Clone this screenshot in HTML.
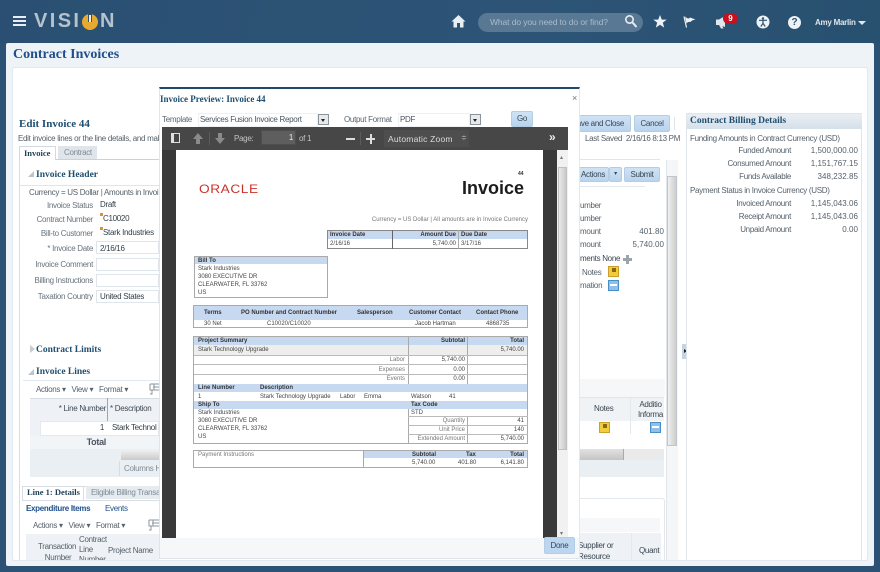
<!DOCTYPE html>
<html><head><meta charset="utf-8"><style>
html,body{margin:0;padding:0;width:880px;height:572px;overflow:hidden;background:#2b5174}
*{box-sizing:border-box}
body{font-family:"Liberation Sans",sans-serif;font-size:8px;letter-spacing:-.3px;color:#56616b;position:relative}
.a,.t,.r,.b{position:absolute}
.t{white-space:nowrap;line-height:10px}
.r{white-space:nowrap;line-height:10px;text-align:right}
.n{letter-spacing:.05px;font-size:8px}
.s{font-family:"Liberation Serif",serif;letter-spacing:0}
.h{font-family:"Liberation Serif",serif;font-weight:bold;color:#1f4e6e;letter-spacing:0}
.btn{position:absolute;background:linear-gradient(#cfe3f5,#b8d4ee);border:1px solid #b4cde3;border-radius:2px;text-align:center;color:#3a4650;line-height:15px;font-size:8px;white-space:nowrap;overflow:hidden}
.inp{position:absolute;background:#fff;border:1px solid #dfe5ea;height:13px}
.p{font-family:"Liberation Sans",sans-serif;font-size:6px;color:#444;line-height:8px;letter-spacing:0}
.ph{font-weight:bold;color:#333}
.bl{background:#c6d9f0}
</style></head><body>

<!-- header -->
<div class="a" style="left:0;top:0;width:880px;height:43px;background:linear-gradient(100deg,#2a4f72,#2d5476 60%,#28506f)"></div>
<div class="a" style="left:13px;top:16px;width:13px;height:2px;background:#e8edf2"></div>
<div class="a" style="left:13px;top:20px;width:13px;height:2px;background:#e8edf2"></div>
<div class="a" style="left:13px;top:24px;width:13px;height:2px;background:#e8edf2"></div>
<div class="t" style="left:34px;top:11px;font-size:20px;line-height:20px;font-weight:bold;color:#b6c2cc;letter-spacing:2.4px">VISI</div>
<div class="a" style="left:82px;top:14px;width:16px;height:16px;border-radius:50%;background:#e8a92f"></div>
<div class="a" style="left:88px;top:12px;width:4px;height:10px;background:#2c5173"></div>
<div class="a" style="left:89px;top:15px;width:2px;height:7px;background:#f4efe2"></div>
<div class="t" style="left:100px;top:11px;font-size:20px;line-height:20px;font-weight:bold;color:#b6c2cc;letter-spacing:0">N</div>

<svg class="a" style="left:451px;top:14px" width="15" height="14" viewBox="0 0 15 14"><path d="M7.5 1L0.5 7.5H2.5V13.5H6V9H9V13.5H12.500V7.500H14.500Z" fill="#e9eef2"/></svg>
<div class="a" style="left:478px;top:13px;width:165px;height:19px;border-radius:10px;background:#587893"></div>
<div class="t" style="left:490px;top:17px;font-size:8.500px;letter-spacing:-.1px;color:#a9bccb">What do you need to do or find?</div>
<svg class="a" style="left:624px;top:14px" width="14" height="15" viewBox="0 0 14 15"><circle cx="5.500" cy="5.500" r="3.700" fill="none" stroke="#e9eef2" stroke-width="1.600"/><path d="M8.500 8.500L12.500 13" stroke="#e9eef2" stroke-width="2"/></svg>
<svg class="a" style="left:653px;top:15px" width="14" height="13" viewBox="0 0 14 13"><path d="M7 0L8.800 4.600H13.700L9.800 7.600L11.200 12.600L7 9.700L2.800 12.600L4.200 7.600L.3 4.600H5.200Z" fill="#eef2f5"/></svg>
<svg class="a" style="left:683px;top:15px" width="15" height="14" viewBox="0 0 15 14"><path d="M1 1.500L3.500 12.500" stroke="#eef2f5" stroke-width="1.200" fill="none"/><path d="M2 1.500C4 3.500 6 4.200 7 2.500L12.500 4.500C10 4.800 8.500 5.800 7.500 7C6 6.500 4.500 7 3.500 8.500Z" fill="#eef2f5"/></svg>
<svg class="a" style="left:715px;top:15px" width="14" height="14" viewBox="0 0 14 14"><path d="M1 4.500H4L10 1V12L4 10H1Z" fill="#dfe6ec"/><path d="M4 10L6 13.500H8.500L7 10.500Z" fill="#dfe6ec"/></svg>
<div class="a" style="left:723px;top:13px;width:15px;height:11px;border-radius:6px;background:#c8101e;color:#fff;font-size:8px;line-height:11px;text-align:center;font-weight:bold;letter-spacing:0">9</div>
<svg class="a" style="left:756px;top:15px" width="14" height="14" viewBox="0 0 14 14"><circle cx="7" cy="7" r="6.500" fill="#eef2f5"/><circle cx="7" cy="3.500" r="1.200" fill="#2c5173"/><path d="M3 5.300H11M7 5.300V8.300M7 8.300L4.800 11.500M7 8.300L9.200 11.500" stroke="#2c5173" stroke-width="1.200" fill="none"/></svg>
<div class="a" style="left:788px;top:16px;width:13px;height:13px;border-radius:50%;background:#eef2f5;color:#2c5173;font-size:10px;line-height:13px;text-align:center;font-weight:bold;letter-spacing:0">?</div>
<div class="t" style="left:815px;top:18px;font-size:8px;letter-spacing:-.25px;font-weight:bold;color:#dfe6ec">Amy Marlin</div>
<div class="a" style="left:858px;top:21px;border-left:4px solid transparent;border-right:4px solid transparent;border-top:4px solid #dfe6ec"></div>

<!-- main panel -->
<div class="a" style="left:6px;top:43px;width:868px;height:523px;background:#eef3f7;border-radius:2px"></div>
<div class="t h" style="left:13px;top:47px;font-size:14px;line-height:15px;color:#1f4f8a">Contract Invoices</div>
<div class="a" style="left:12px;top:67px;width:856px;height:494px;background:#fff;border:1px solid #e3e8ed;border-radius:3px"></div>

<!-- left content -->
<div class="t h" style="left:19px;top:118px;font-size:11px;line-height:12px">Edit Invoice 44</div>
<div class="t" style="left:18px;top:134px">Edit invoice lines or the line details, and make</div>
<div class="a" style="left:19px;top:146px;width:140px;height:414px;border-left:1px solid #d7dde3"></div>
<div class="a" style="left:19px;top:159px;width:140px;height:1px;background:#c9d2da"></div>
<div class="a" style="left:19px;top:146px;width:37px;height:14px;background:#fff;border:1px solid #d2dae1;border-bottom:none"></div>
<div class="t s" style="left:24px;top:148px;font-weight:bold;color:#1f3f55;font-size:8.500px">Invoice</div>
<div class="a" style="left:58px;top:146px;width:39px;height:13px;background:#dfe5ea"></div>
<div class="t" style="left:64px;top:148px;color:#7f8b96">Contract</div>
<div class="a" style="left:28px;top:171px;border-left:6px solid transparent;border-bottom:6px solid #bcc4cc"></div>
<div class="t h" style="left:36px;top:170px;font-size:9.500px">Invoice Header</div>
<div class="a" style="left:20px;top:185px;width:139px;height:1px;background:#dfe5ea"></div>
<div class="t" style="left:29px;top:188px">Currency = US Dollar | Amounts in Invoi</div>
<div class="r" style="left:20px;top:201px;width:73px;color:#69737d">Invoice Status</div>
<div class="t" style="left:100px;top:200px;color:#333f49">Draft</div>
<div class="r" style="left:20px;top:215px;width:73px;color:#69737d">Contract Number</div>
<div class="a" style="left:100px;top:213px;width:3px;height:3px;background:#d9923b"></div>
<div class="t" style="left:103px;top:214px;color:#333f49">C10020</div>
<div class="r" style="left:20px;top:229px;width:73px;color:#69737d">Bill-to Customer</div>
<div class="a" style="left:100px;top:227px;width:3px;height:3px;background:#d9923b"></div>
<div class="t" style="left:103px;top:228px;color:#333f49">Stark Industries</div>
<div class="r" style="left:20px;top:244px;width:73px;color:#69737d">* Invoice Date</div>
<div class="inp" style="left:96px;top:241px;width:63px"></div>
<div class="t" style="left:100px;top:244px;color:#333f49">2/16/16</div>
<div class="r" style="left:20px;top:260px;width:73px;color:#69737d">Invoice Comment</div>
<div class="inp" style="left:96px;top:258px;width:63px"></div>
<div class="r" style="left:20px;top:276px;width:73px;color:#69737d">Billing Instructions</div>
<div class="inp" style="left:96px;top:274px;width:63px"></div>
<div class="r" style="left:20px;top:292px;width:73px;color:#69737d">Taxation Country</div>
<div class="inp" style="left:96px;top:290px;width:63px"></div>
<div class="t" style="left:100px;top:292px;color:#333f49">United States</div>

<div class="a" style="left:30px;top:345px;border-left:5px solid #c4ccd4;border-top:4px solid transparent;border-bottom:4px solid transparent"></div>
<div class="t h" style="left:36px;top:345px;font-size:9.500px">Contract Limits</div>
<div class="a" style="left:28px;top:369px;border-left:6px solid transparent;border-bottom:6px solid #bcc4cc"></div>
<div class="t h" style="left:36px;top:367px;font-size:9.500px">Invoice Lines</div>
<div class="a" style="left:23px;top:380px;width:136px;height:1px;background:#e3e8ed"></div>
<div class="t" style="left:36px;top:385px">Actions ▾ &nbsp;&nbsp;View ▾ &nbsp;&nbsp;Format ▾</div>
<svg class="a" style="left:149px;top:383px" width="10" height="12" viewBox="0 0 10 12"><path d="M1 1H10M1 1V7H10M4 4H10M5 1V7M3 7V11H1" stroke="#8a949d" fill="none"/></svg>
<div class="a" style="left:30px;top:398px;width:129px;height:38px;background:#eef2f6"></div>
<div class="a" style="left:30px;top:398px;width:129px;height:1px;background:#d5dce2"></div>
<div class="a" style="left:107px;top:398px;width:1px;height:51px;background:#6bb7d6"></div>
<div class="r" style="left:40px;top:404px;width:66px;color:#404b55">* Line Number</div>
<div class="t" style="left:110px;top:404px;color:#404b55">* Description</div>
<div class="a" style="left:40px;top:421px;width:119px;height:15px;background:#fff;border:1px solid #e5e9ed"></div>
<div class="r" style="left:40px;top:423px;width:64px;color:#333f49">1</div>
<div class="t" style="left:112px;top:423px;color:#333f49">Stark Technol</div>
<div class="a" style="left:30px;top:436px;width:129px;height:13px;background:#f2f5f8"></div>
<div class="r" style="left:40px;top:437px;width:66px;font-weight:bold;color:#4a5560;font-size:9px">Total</div>
<div class="a" style="left:30px;top:449px;width:129px;height:28px;background:#eaeff3"></div>
<div class="a" style="left:121px;top:450px;width:38px;height:10px;background:linear-gradient(#f0f0f0,#c9c9c9)"></div>
<div class="a" style="left:119px;top:461px;width:1px;height:15px;background:#d5dce2"></div>
<div class="t" style="left:124px;top:464px;color:#7f8b96">Columns H</div>

<div class="a" style="left:22px;top:486px;width:137px;height:1px;background:#d7dde3"></div>
<div class="a" style="left:22px;top:486px;width:62px;height:14px;background:#fff;border:1px solid #d7dde3;border-bottom:none"></div>
<div class="t s" style="left:27px;top:487px;font-weight:bold;color:#1f3f55;font-size:8.500px">Line 1: Details</div>
<div class="a" style="left:86px;top:486px;width:73px;height:13px;background:#e6ebef"></div>
<div class="t" style="left:91px;top:488px;color:#7f8b96">Eligible Billing Transa</div>
<div class="a" style="left:22px;top:500px;width:137px;height:1px;background:#d7dde3"></div>
<div class="t" style="left:26px;top:504px;font-weight:bold;color:#1f4f8a">Expenditure Items</div>
<div class="t" style="left:105px;top:504px;color:#1f4f8a">Events</div>
<div class="t" style="left:33px;top:521px">Actions ▾ &nbsp;&nbsp;View ▾ &nbsp;&nbsp;Format ▾</div>
<svg class="a" style="left:148px;top:519px" width="11" height="12" viewBox="0 0 11 12"><path d="M1 1H11M1 1V7H11M4 4H11M5 1V7M3 7V11H1" stroke="#8a949d" fill="none"/></svg>
<div class="a" style="left:26px;top:534px;width:133px;height:26px;background:#eef2f6"></div>
<div class="t" style="left:38px;top:541px;text-align:center;line-height:11px">Transaction<br>&nbsp;Number</div>
<div class="t" style="left:79px;top:535px;line-height:10px;height:25px;overflow:hidden">Contract<br>Line<br>Number</div>
<div class="t" style="left:108px;top:546px">Project Name</div>
<div class="a" style="left:12px;top:560px;width:856px;height:1px;background:#e3e8ed"></div>

<!-- right behind-modal -->
<div class="btn" style="left:570px;top:115px;width:61px;height:17px;text-align:right;padding-right:6px">Save and Close</div>
<div class="btn" style="left:634px;top:115px;width:36px;height:17px">Cancel</div>
<div class="a" style="left:674px;top:117px;width:1px;height:13px;background:#dfe5ea"></div>
<div class="t" style="left:585px;top:134px;color:#55606a">Last Saved &nbsp;2/16/16 8:13 PM</div>
<div class="a" style="left:580px;top:159px;width:80px;height:1px;background:#dfe5ea"></div>
<div class="btn" style="left:575px;top:167px;width:34px;height:15px;line-height:13px;text-align:left;padding-left:5px">Actions</div>
<div class="btn" style="left:609px;top:167px;width:13px;height:15px;line-height:13px;font-size:6px">▾</div>
<div class="btn" style="left:624px;top:167px;width:36px;height:15px;line-height:13px">Submit</div>
<div class="a" style="left:580px;top:186px;width:65px;height:1px;background:#e3e8ed"></div>
<div class="t" style="left:580px;top:201px">umber</div>
<div class="t" style="left:580px;top:214px">umber</div>
<div class="t" style="left:580px;top:227px">mount</div>
<div class="r n" style="left:620px;top:227px;width:44px">401.80</div>
<div class="t" style="left:580px;top:240px">mount</div>
<div class="r n" style="left:620px;top:240px;width:44px">5,740.00</div>
<div class="t" style="left:580px;top:254px;color:#3a4650">ments None</div>
<div class="a" style="left:623px;top:255px;width:9px;height:9px;background:linear-gradient(#9aa4ac,#9aa4ac) center/9px 3px no-repeat,linear-gradient(#9aa4ac,#9aa4ac) center/3px 9px no-repeat"></div>
<div class="t" style="left:582px;top:268px">Notes</div>
<div class="a" style="left:608px;top:266px;width:11px;height:11px;background:#f2cc3c;border:1px solid #c9a02a"></div>
<div class="a" style="left:612px;top:268px;width:4px;height:4px;background:#8a6a10"></div>
<div class="t" style="left:580px;top:281px">mation</div>
<div class="a" style="left:608px;top:280px;width:11px;height:11px;background:#8fc0ec;border:1px solid #4a8ec8"></div>
<div class="a" style="left:610px;top:284px;width:7px;height:2px;background:#fff"></div>

<!-- inner scrollbar -->
<div class="a" style="left:666px;top:160px;width:1px;height:400px;background:#e1e6ea"></div>
<div class="a" style="left:667px;top:160px;width:11px;height:400px;background:#f4f6f8"></div>
<div class="a" style="left:667px;top:176px;width:10px;height:270px;background:linear-gradient(90deg,#f0f0f0,#cdcdcd);border:1px solid #c2c6ca"></div>
<div class="a" style="left:580px;top:379px;width:85px;height:18px;background:#f5f7f9"></div>
<div class="a" style="left:580px;top:397px;width:84px;height:24px;background:#f0f3f6;border-top:1px solid #dfe5ea"></div>
<div class="t" style="left:594px;top:404px;color:#3a4650">Notes</div>
<div class="a" style="left:630px;top:398px;width:1px;height:36px;background:#e3e8ed"></div>
<div class="t" style="left:637px;top:400px;color:#3a4650;line-height:10px;width:27px;overflow:hidden;text-align:center">Additio<br>Informa</div>
<div class="a" style="left:599px;top:422px;width:11px;height:11px;background:#f2cc3c;border:1px solid #c9a02a"></div>
<div class="a" style="left:603px;top:424px;width:4px;height:4px;background:#8a6a10"></div>
<div class="a" style="left:650px;top:422px;width:11px;height:11px;background:#8fc0ec;border:1px solid #4a8ec8"></div>
<div class="a" style="left:652px;top:426px;width:7px;height:2px;background:#fff"></div>
<div class="a" style="left:580px;top:449px;width:44px;height:11px;background:linear-gradient(#e2e2e2,#c4c4c4);border-right:1px solid #aaa"></div>
<div class="a" style="left:624px;top:449px;width:40px;height:11px;background:#eaeaea"></div>
<div class="a" style="left:580px;top:460px;width:84px;height:17px;background:#eaeff3"></div>
<div class="a" style="left:580px;top:498px;width:85px;height:62px;border:1px solid #e3e8ed;border-left:none;border-bottom:none;border-radius:0 3px 0 0"></div>
<div class="a" style="left:580px;top:518px;width:80px;height:14px;background:#f5f7f9"></div>
<div class="a" style="left:580px;top:533px;width:81px;height:27px;background:#eef2f6"></div>
<div class="a" style="left:631px;top:533px;width:1px;height:27px;background:#e3e8ed"></div>
<div class="t" style="left:578px;top:541px;color:#3a4650;line-height:10.500px">Supplier or<br>Resource</div>
<div class="t" style="left:639px;top:546px;color:#3a4650">Quant</div>

<!-- splitter -->
<div class="a" style="left:682px;top:344px;width:5px;height:15px;background:#c2d4e6"></div>
<div class="a" style="left:684px;top:349px;border-left:3px solid #222;border-top:2.500px solid transparent;border-bottom:2.500px solid transparent"></div>

<!-- billing panel -->
<div class="a" style="left:686px;top:113px;width:176px;height:447px;border:1px solid #dfe5ea;border-bottom:none"></div>
<div class="a" style="left:687px;top:114px;width:175px;height:15px;background:linear-gradient(#e9eff4,#d5e0e9)"></div>
<div class="t h" style="left:690px;top:116px;font-size:9.500px">Contract Billing Details</div>
<div class="t" style="left:690px;top:134px">Funding Amounts in Contract Currency (USD)</div>
<div class="r" style="left:690px;top:146px;width:101px">Funded Amount</div>
<div class="r n" style="left:800px;top:146px;width:58px">1,500,000.00</div>
<div class="r" style="left:690px;top:159px;width:101px">Consumed Amount</div>
<div class="r n" style="left:800px;top:159px;width:58px">1,151,767.15</div>
<div class="r" style="left:690px;top:172px;width:101px">Funds Available</div>
<div class="r n" style="left:800px;top:172px;width:58px">348,232.85</div>
<div class="t" style="left:690px;top:186px">Payment Status in Invoice Currency (USD)</div>
<div class="r" style="left:690px;top:199px;width:101px">Invoiced Amount</div>
<div class="r n" style="left:800px;top:199px;width:58px">1,145,043.06</div>
<div class="r" style="left:690px;top:212px;width:101px">Receipt Amount</div>
<div class="r n" style="left:800px;top:212px;width:58px">1,145,043.06</div>
<div class="r" style="left:690px;top:225px;width:101px">Unpaid Amount</div>
<div class="r n" style="left:800px;top:225px;width:58px">0.00</div>

<!-- modal -->
<div class="a" style="left:159px;top:87px;width:421px;height:472px;background:#fff;border-top:2px solid #1d4c6b;border-left:1px solid #dfe5ea;border-right:1px solid #e3e8ed;border-bottom:1px solid #dfe5ea"></div>
<div class="a" style="left:160px;top:538px;width:419px;height:20px;background:#f6f7f9"></div>
<div class="t h" style="left:160px;top:94px;font-size:9px">Invoice Preview: Invoice 44</div>
<div class="t" style="left:572px;top:93px;font-size:9px;color:#6a747e">×</div>
<div class="t" style="left:162px;top:115px;color:#5a6570">Template</div>
<div class="inp" style="left:198px;top:113px;width:120px;height:14px;border-color:#eef1f4"></div>
<div class="t" style="left:200px;top:115px;color:#4a5560">Services Fusion Invoice Report</div>
<div class="a" style="left:318px;top:114px;width:11px;height:11px;background:#e9e9e9;border:1px solid #8a949d"></div>
<div class="a" style="left:321px;top:119px;border-left:2.500px solid transparent;border-right:2.500px solid transparent;border-top:3px solid #222"></div>
<div class="t" style="left:344px;top:115px;color:#5a6570">Output Format</div>
<div class="inp" style="left:398px;top:113px;width:72px;height:14px;border-color:#eef1f4"></div>
<div class="t" style="left:400px;top:115px;color:#4a5560">PDF</div>
<div class="a" style="left:470px;top:114px;width:11px;height:11px;background:#e9e9e9;border:1px solid #8a949d"></div>
<div class="a" style="left:473px;top:119px;border-left:2.500px solid transparent;border-right:2.500px solid transparent;border-top:3px solid #222"></div>
<div class="btn" style="left:511px;top:111px;width:22px;height:16px;line-height:14px">Go</div>

<!-- pdf viewer -->
<div class="a" style="left:162px;top:127px;width:382px;height:411px;background:#393939"></div>
<div class="a" style="left:543px;top:127px;width:14px;height:411px;background:#393939"></div>
<div class="a" style="left:557px;top:150px;width:11px;height:388px;background:#f1f1f1"></div>
<div class="a" style="left:558px;top:167px;width:9px;height:283px;background:linear-gradient(90deg,#eaeaea,#c9c9c9);border:1px solid #c0c0c0"></div>
<div class="t" style="left:560px;top:153px;font-size:6px;color:#777">▴</div>
<div class="t" style="left:560px;top:529px;font-size:6px;color:#777">▾</div>
<div class="a" style="left:162px;top:127px;width:406px;height:23px;background:#474747"></div>
<div class="a" style="left:171px;top:133px;width:9px;height:10px;border:1px solid #e0e0e0;border-left-width:3px"></div>
<svg class="a" style="left:193px;top:133px" width="10" height="11" viewBox="0 0 10 11"><path d="M5 0L10 6H7V11H3V6H0Z" fill="#8a8a8a"/></svg>
<div class="a" style="left:209px;top:132px;width:1px;height:13px;background:#5c5c5c"></div>
<svg class="a" style="left:215px;top:133px" width="10" height="11" viewBox="0 0 10 11"><path d="M5 11L10 5H7V0H3V5H0Z" fill="#8a8a8a"/></svg>
<div class="t" style="left:234px;top:134px;color:#c4c4c4">Page:</div>
<div class="a" style="left:261px;top:130px;width:35px;height:15px;background:#5e5e5e;border:1px solid #4e4e4e"></div>
<div class="r" style="left:262px;top:133px;width:31px;color:#e8e8e8">1</div>
<div class="t" style="left:299px;top:134px;color:#c4c4c4">of 1</div>
<div class="a" style="left:346px;top:138px;width:9px;height:2px;background:#ddd"></div>
<div class="a" style="left:360px;top:132px;width:1px;height:13px;background:#5c5c5c"></div>
<div class="a" style="left:366px;top:138px;width:9px;height:2px;background:#ddd"></div>
<div class="a" style="left:370px;top:134px;width:2px;height:10px;background:#ddd"></div>
<div class="a" style="left:384px;top:130px;width:85px;height:17px;background:#4e4e4e"></div>
<div class="t" style="left:388px;top:134px;color:#dcdcdc;font-size:8.500px;letter-spacing:.2px">Automatic Zoom</div>
<div class="t" style="left:461px;top:134px;color:#bbb;font-size:7px">≑</div>
<div class="t" style="left:549px;top:132px;color:#ececec;font-size:12px;font-weight:bold;letter-spacing:-1px">»</div>

<!-- pdf page -->
<div class="a" style="left:176px;top:150px;width:367px;height:388px;background:#fff"></div>
<div class="t" style="left:199px;top:183px;font-size:12px;line-height:12px;color:#c9322c;letter-spacing:.5px;transform:scaleX(1.14);transform-origin:left">ORACLE</div>
<div class="t p ph" style="left:518px;top:170px;font-size:5px">44</div>
<div class="r" style="left:420px;top:178px;width:104px;font-size:18px;line-height:21px;font-weight:bold;color:#1c1c1c;letter-spacing:0">Invoice</div>
<div class="r" style="left:300px;top:216px;width:228px;font-size:6px;color:#777;line-height:8px;letter-spacing:0">Currency = US Dollar | All amounts are in Invoice Currency</div>

<div class="a bl" style="left:327px;top:230px;width:201px;height:9px"></div>
<div class="a" style="left:327px;top:230px;width:201px;height:19px;border:1px solid #888"></div>
<div class="a" style="left:392px;top:230px;width:1px;height:19px;background:#666"></div>
<div class="a" style="left:458px;top:230px;width:1px;height:19px;background:#aaa"></div>
<div class="t p ph" style="left:330px;top:231px">Invoice Date</div>
<div class="r p ph" style="left:393px;top:231px;width:63px">Amount Due</div>
<div class="t p ph" style="left:461px;top:231px">Due Date</div>
<div class="t p" style="left:330px;top:240px">2/16/16</div>
<div class="r p" style="left:393px;top:240px;width:63px">5,740.00</div>
<div class="t p" style="left:461px;top:240px">3/17/16</div>

<div class="a bl" style="left:194px;top:256px;width:133px;height:8px"></div>
<div class="a" style="left:194px;top:256px;width:134px;height:42px;border:1px solid #aaa"></div>
<div class="t p ph" style="left:198px;top:257px">Bill To</div>
<div class="t p" style="left:198px;top:265px">Stark Industries</div>
<div class="t p" style="left:198px;top:273px">3080 EXECUTIVE DR</div>
<div class="t p" style="left:198px;top:281px">CLEARWATER, FL 33762</div>
<div class="t p" style="left:198px;top:289px">US</div>

<div class="a bl" style="left:194px;top:306px;width:334px;height:14px"></div>
<div class="a" style="left:193px;top:305px;width:335px;height:23px;border:1px solid #aaa"></div>
<div class="t p ph" style="left:204px;top:309px">Terms</div>
<div class="t p ph" style="left:241px;top:309px">PO Number and Contract Number</div>
<div class="t p ph" style="left:357px;top:309px">Salesperson</div>
<div class="t p ph" style="left:409px;top:309px">Customer Contact</div>
<div class="t p ph" style="left:476px;top:309px">Contact Phone</div>
<div class="t p" style="left:204px;top:320px">30 Net</div>
<div class="t p" style="left:267px;top:320px">C10020/C10020</div>
<div class="t p" style="left:415px;top:320px">Jacob Hartman</div>
<div class="t p" style="left:486px;top:320px">4868735</div>

<!-- project summary -->
<div class="a" style="left:193px;top:336px;width:335px;height:108px;border:1px solid #aaa"></div>
<div class="a bl" style="left:194px;top:337px;width:333px;height:8px"></div>
<div class="a" style="left:194px;top:345px;width:333px;height:10px;background:#eeeeec"></div>
<div class="a" style="left:408px;top:336px;width:1px;height:48px;background:#aaa"></div>
<div class="a" style="left:467px;top:336px;width:1px;height:48px;background:#aaa"></div>
<div class="a" style="left:194px;top:355px;width:333px;height:1px;background:#bbb"></div>
<div class="a" style="left:194px;top:364px;width:333px;height:1px;background:#bbb"></div>
<div class="a" style="left:194px;top:374px;width:333px;height:1px;background:#bbb"></div>
<div class="t p ph" style="left:198px;top:337px">Project Summary</div>
<div class="r p ph" style="left:409px;top:337px;width:56px">Subtotal</div>
<div class="r p ph" style="left:468px;top:337px;width:56px">Total</div>
<div class="t p" style="left:198px;top:346px">Stark Technology Upgrade</div>
<div class="r p" style="left:468px;top:346px;width:56px">5,740.00</div>
<div class="r p" style="left:300px;top:356px;width:105px;color:#777">Labor</div>
<div class="r p" style="left:409px;top:356px;width:56px">5,740.00</div>
<div class="r p" style="left:300px;top:366px;width:105px;color:#777">Expenses</div>
<div class="r p" style="left:409px;top:366px;width:56px">0.00</div>
<div class="r p" style="left:300px;top:375px;width:105px;color:#777">Events</div>
<div class="r p" style="left:409px;top:375px;width:56px">0.00</div>
<div class="a bl" style="left:194px;top:384px;width:333px;height:8px"></div>
<div class="t p ph" style="left:198px;top:384px">Line Number</div>
<div class="t p ph" style="left:260px;top:384px">Description</div>
<div class="t p" style="left:198px;top:393px">1</div>
<div class="t p" style="left:260px;top:393px">Stark Technology Upgrade</div>
<div class="t p" style="left:340px;top:393px">Labor</div>
<div class="t p" style="left:364px;top:393px">Emma</div>
<div class="t p" style="left:411px;top:393px">Watson</div>
<div class="t p" style="left:449px;top:393px">41</div>
<div class="a bl" style="left:194px;top:401px;width:333px;height:8px"></div>
<div class="t p ph" style="left:198px;top:401px">Ship To</div>
<div class="t p ph" style="left:411px;top:401px">Tax Code</div>
<div class="t p" style="left:198px;top:409px">Stark Industries</div>
<div class="t p" style="left:411px;top:409px">STD</div>
<div class="t p" style="left:198px;top:417px">3080 EXECUTIVE DR</div>
<div class="t p" style="left:198px;top:425px">CLEARWATER, FL 33762</div>
<div class="t p" style="left:198px;top:433px">US</div>
<div class="a" style="left:408px;top:409px;width:1px;height:35px;background:#aaa"></div>
<div class="a" style="left:467px;top:417px;width:1px;height:27px;background:#aaa"></div>
<div class="a" style="left:408px;top:416px;width:120px;height:1px;background:#bbb"></div>
<div class="a" style="left:408px;top:425px;width:120px;height:1px;background:#bbb"></div>
<div class="a" style="left:408px;top:434px;width:120px;height:1px;background:#bbb"></div>
<div class="r p" style="left:409px;top:417px;width:56px;color:#777">Quantity</div>
<div class="r p" style="left:468px;top:417px;width:56px">41</div>
<div class="r p" style="left:409px;top:426px;width:56px;color:#777">Unit Price</div>
<div class="r p" style="left:468px;top:426px;width:56px">140</div>
<div class="r p" style="left:409px;top:435px;width:56px;color:#777">Extended Amount</div>
<div class="r p" style="left:468px;top:435px;width:56px">5,740.00</div>

<!-- payment -->
<div class="a" style="left:193px;top:450px;width:335px;height:18px;border:1px solid #aaa"></div>
<div class="a bl" style="left:364px;top:451px;width:163px;height:7px"></div>
<div class="a" style="left:363px;top:450px;width:1px;height:18px;background:#aaa"></div>
<div class="t p" style="left:198px;top:451px;color:#777">Payment Instructions</div>
<div class="t p ph" style="left:412px;top:451px">Subtotal</div>
<div class="t p ph" style="left:466px;top:451px">Tax</div>
<div class="r p ph" style="left:490px;top:451px;width:34px">Total</div>
<div class="t p" style="left:412px;top:459px">5,740.00</div>
<div class="t p" style="left:458px;top:459px">401.80</div>
<div class="r p" style="left:490px;top:459px;width:34px">6,141.80</div>

<div class="btn" style="left:544px;top:537px;width:31px;height:17px;background:#bcd6ef;line-height:15px">Done</div>

</body></html>
